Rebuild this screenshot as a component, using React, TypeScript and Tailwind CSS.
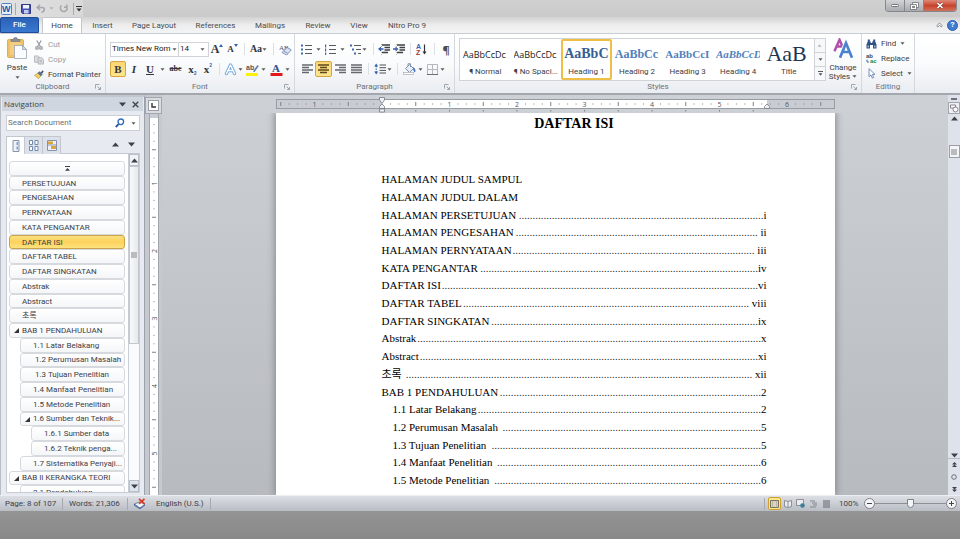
import React, { useLayoutEffect, useRef, useState } from "react";

type Kids = { children?: React.ReactNode };

function Caret({ dim = false }: { dim?: boolean }) {
  return (
    <svg width="5" height="3" viewBox="0 0 5 3" className="shrink-0" aria-hidden="true">
      <path d="M0.5 0.3h4L2.5 2.7z" fill={dim ? "#b5b5b5" : "#5a5a5a"} />
    </svg>
  );
}

function Tool({ label, className = "w-4", active = false, children }: Kids & { label: string; className?: string; active?: boolean }) {
  return (
    <button
      type="button"
      aria-label={label}
      className={`flex h-4 shrink-0 items-center justify-center ${className} ${
        active ? "rounded-xs border border-[#d3a640] bg-linear-to-b from-[#fbd673] to-[#fde58c]" : ""
      }`}
    >
      {children}
    </button>
  );
}

function Sep({ className = "w-2" }: { className?: string }) {
  return (
    <span className={`flex h-3 shrink-0 justify-center ${className}`}>
      <span className="w-px bg-[#dcdfe3]" />
    </span>
  );
}

function Group({ name, className, launcher = true, children }: Kids & { name: string; className: string; launcher?: boolean }) {
  return (
    <section aria-label={name} className={`flex h-full flex-col border-r border-[#d5d8dd] ${className}`}>
      <div className="min-h-0 flex-1">{children}</div>
      <div className="relative flex h-3 items-center justify-center text-[#6c7079]">
        <span>{name}</span>
        {launcher && (
          <button type="button" aria-label={`${name} options`} className="absolute right-1 top-[3px]">
            <svg width="6" height="6" viewBox="0 0 6 6" fill="none" stroke="#8f949c" strokeWidth="0.8">
              <path d="M0.5 4.5v-4h4M2.5 2.5l3 3M5.5 3v2.5H3" />
            </svg>
          </button>
        )}
      </div>
    </section>
  );
}

/* ---------- icons ---------- */

function PasteIcon() {
  return (
    <svg width="20" height="22" viewBox="0 0 20 22" aria-hidden="true">
      <rect x="0.5" y="2.5" width="16" height="18" rx="1.2" fill="#eec067" stroke="#dcae5c" />
      <rect x="3" y="5" width="11" height="13" fill="#f4cd7e" />
      <path d="M4 4.5V2.5h2.2C6.5 1 7.3 0.5 8.5 0.5s2 0.5 2.3 2H13v2z" fill="#8a8f96" stroke="#6f757c" strokeWidth="0.6" />
      <path d="M7.500 8.500h8l4 4v9h-12z" fill="#fbfcfe" stroke="#9aa5b3" strokeWidth="0.8" />
      <path d="M15.500 8.500v4h4z" fill="#cfd9e6" stroke="#9aa5b3" strokeWidth="0.8" />
    </svg>
  );
}

function CutIcon() {
  return (
    <svg width="8" height="10" viewBox="0 0 8 10" fill="none" stroke="#9a9da2" strokeWidth="1.3" aria-hidden="true">
      <path d="M1.800 0.500L5.300 6.500M6.200 0.500L2.700 6.500" />
      <circle cx="2" cy="7.900" r="1.300" />
      <circle cx="6" cy="7.900" r="1.300" />
    </svg>
  );
}

function CopyIcon() {
  return (
    <svg width="11" height="10" viewBox="0 0 11 10" stroke="#a6a9ae" strokeWidth="0.8" fill="#dcdde0" aria-hidden="true">
      <path d="M0.500 0.500h4l2 2v5h-6z" />
      <path d="M4.500 2.500h4l2 2v5h-6z" />
      <path d="M6 5.500h3M6 7.200h3" />
    </svg>
  );
}

function BrushIcon() {
  return (
    <svg width="12" height="11" viewBox="0 0 12 11" aria-hidden="true">
      <path d="M0.500 6.500L5 3.500l3.500 3.500-3 3.500z" fill="#f3cf60" stroke="#a98a3a" strokeWidth="0.6" />
      <path d="M4.200 3.800L6.800 1.500l3.700 3.700-2.300 2.300z" fill="#5b6f8e" />
      <path d="M8.300 3L10.200 0.400l1.400 1.400L9.500 4.500z" fill="#3c4a63" />
    </svg>
  );
}

function EraserIcon() {
  return (
    <svg width="13" height="13" viewBox="0 0 13 13" aria-hidden="true">
      <text x="0" y="6.500" fontSize="7" fontFamily="Liberation Serif" fill="#39537f">AB</text>
      <path d="M3 9.500l5-5 4.300 2.300-4.600 5.200z" fill="#dbe3f2" stroke="#6b80ab" strokeWidth="0.8" />
      <path d="M4.700 8l4 2.300" stroke="#6b80ab" strokeWidth="0.8" />
    </svg>
  );
}

function ListIcon({ kind }: { kind: "bullet" | "number" | "multi" }) {
  const rows = [1, 5, 9];
  return (
    <svg width="11" height="11" viewBox="0 0 11 11" aria-hidden="true">
      {rows.map((y, i) => {
        const shift = kind === "multi" ? i * 2 : 0;
        return (
          <g key={y}>
            <rect x={shift} y={y - 0.5} width={kind === "number" ? 1.2 : 2} height={kind === "number" ? 3 : 2} fill="#4167b2" />
            <rect x={4 + shift} y={y} width={7 - shift} height="1" fill="#555b63" />
          </g>
        );
      })}
    </svg>
  );
}

function IndentIcon({ flip = false }: { flip?: boolean }) {
  return (
    <svg width="12" height="11" viewBox="0 0 12 11" aria-hidden="true">
      <path d="M4 1h8M6.500 3.500H12M6.500 6H12M4 8.500h6" stroke="#3c3f44" strokeWidth="1.3" />
      <path d={flip ? "M0 5l3-2.500v1.800h2.500v1.400H3v1.800z" : "M5.500 5L2.500 2.500v1.800H0v1.400h2.500v1.800z"} fill="#3560b0" />
      <path d="M3.500 0v11" stroke="#777" strokeWidth="0.5" strokeDasharray="1 1" />
    </svg>
  );
}

function AlignIcon({ d, fill = "#65696f" }: { d: string; fill?: string }) {
  return (
    <svg width="11" height="10" viewBox="0 0 11 10" stroke={fill} strokeWidth="1.7" aria-hidden="true">
      <path d={d} />
    </svg>
  );
}

function SortIcon() {
  return (
    <svg width="12" height="13" viewBox="0 0 12 13" aria-hidden="true">
      <text x="0" y="6" fontSize="7" fontWeight="bold" fontFamily="Liberation Sans" fill="#3a62b0">A</text>
      <text x="0" y="12" fontSize="7" fontWeight="bold" fontFamily="Liberation Sans" fill="#a8383b">Z</text>
      <path d="M8.500 1.500v9" stroke="#333" strokeWidth="1.2" />
      <path d="M6.500 8.500h4l-2 3z" fill="#333" />
    </svg>
  );
}

function SpacingIcon() {
  return (
    <svg width="12" height="12" viewBox="0 0 12 12" aria-hidden="true">
      <path d="M5.500 2H12M5.500 4.700H12M5.500 7.400H12M5.500 10H12" stroke="#4c5056" />
      <path d="M2.200 0.500L4.200 3.500h-4zM2.200 11.500L4.200 8.500h-4z" fill="#3560b0" />
      <path d="M2.200 3v6" stroke="#3560b0" strokeDasharray="1.5 1" />
    </svg>
  );
}

function BucketIcon() {
  return (
    <svg width="13" height="12" viewBox="0 0 13 12" aria-hidden="true">
      <path d="M2.500 5.500l4-4 4 4-4 4z" fill="#e8eef8" stroke="#7284a5" strokeWidth="0.9" />
      <path d="M5 3V0.700h2.500V4" fill="none" stroke="#7284a5" strokeWidth="0.8" />
      <path d="M10.500 4.500c1.500 1 1.700 3 1.500 4.500-1 0-1.700-2.500-1.500-4.500z" fill="#3d6cc0" stroke="#3d6cc0" strokeWidth="0.6" />
      <rect x="0.500" y="9.500" width="10" height="2" fill="#fff" stroke="#a9adb3" strokeWidth="0.7" />
    </svg>
  );
}

function BordersIcon() {
  return (
    <svg width="11" height="11" viewBox="0 0 11 11" aria-hidden="true">
      <path d="M0.500 0.500h10M0.500 0.500v10M10.500 0.500v10M5.500 0.500v10M0.500 5.500h10" stroke="#b4b8be" />
      <path d="M0 10.500h11" stroke="#6b6f75" />
    </svg>
  );
}

function BinocularsIcon() {
  return (
    <svg width="11" height="10" viewBox="0 0 11 10" fill="#2f4f87" aria-hidden="true">
      <path d="M1.800 0.500h2v2h0.900v1.500h1.600V2.500h0.900v-2h2v2l1.300 3v4H7V6H4v3.500H0.500v-4l1.300-3z" />
      <path d="M1.500 6.500h1.500v2H1.500zM8 6.500h1.500v2H8z" fill="#9db4dc" />
    </svg>
  );
}

function ReplaceIcon() {
  return (
    <svg width="11" height="11" viewBox="0 0 11 11" aria-hidden="true">
      <text x="0" y="5" fontSize="6" fontWeight="bold" fontFamily="Liberation Sans" fill="#444">ab</text>
      <text x="4" y="10" fontSize="6" fontWeight="bold" fontFamily="Liberation Sans" fill="#2c8a3d">ac</text>
      <path d="M1 6.500v2.500h2" fill="none" stroke="#3d6cc0" />
    </svg>
  );
}

function PointerIcon() {
  return (
    <svg width="8" height="11" viewBox="0 0 8 11" aria-hidden="true">
      <path d="M1 0.700v8l2-1.800 1.300 3.200 1.400-0.600L4.400 6.400H7z" fill="#fff" stroke="#5577ae" strokeWidth="0.8" />
    </svg>
  );
}

function StylesIcon() {
  return (
    <svg width="21" height="21" viewBox="0 0 21 21" fill="none" strokeLinecap="square" aria-hidden="true">
      <path d="M2 12L6.500 1.800 11 12M3.800 8.500h5.500" stroke="#b04fae" strokeWidth="2.500" />
      <path d="M7.500 18.500L13 5l5.500 13.500M9.800 14h6.500" stroke="#fff" strokeWidth="4.500" />
      <path d="M7.500 18.500L13 5l5.500 13.500M9.800 14h6.500" stroke="#4b82d0" strokeWidth="2.700" />
    </svg>
  );
}

/* ---------- title bar and tabs ---------- */

function TitleBar() {
  return (
    <header className="flex h-[17px] shrink-0 items-start justify-between bg-linear-to-b from-[#d0d0d1] to-[#cacaca]">
      <div className="flex h-[17px] items-center bg-linear-to-r from-[#e2e2e2] to-[#d8d8d8] pl-px">
        <svg width="11" height="12" viewBox="0 0 11 12" aria-hidden="true">
          <rect x="0.500" y="0.500" width="10" height="11" rx="1" fill="#e4eefa" stroke="#5580bd" />
          <text x="1" y="9" fontSize="9" fontWeight="bold" fontFamily="Liberation Sans" fill="#1f58a8">W</text>
        </svg>
        <span className="mx-[3px] h-3 w-px bg-[#a9a9a9]" />
        <button type="button" aria-label="Save" className="flex w-[14px] justify-center">
          <svg width="10" height="10" viewBox="0 0 10 10">
            <path d="M0.500 0.500h9v9h-8l-1-1z" fill="#4a55b8" stroke="#2f3a8d" />
            <rect x="2" y="1" width="6" height="3.500" fill="#f2f4fb" />
            <rect x="3" y="6" width="4.500" height="3.500" fill="#c8cbe8" />
          </svg>
        </button>
        <button type="button" aria-label="Undo" className="flex w-4 justify-center">
          <svg width="10" height="9" viewBox="0 0 10 9" fill="none" stroke="#a3a7ae" strokeWidth="1.5">
            <path d="M1.500 3.500h4.500c3.500 0 3 4-0.500 5M4 0.800L1.200 3.500 4 6" />
          </svg>
        </button>
        <Caret dim />
        <button type="button" aria-label="Redo" className="flex w-[18px] justify-center">
          <svg width="9" height="9" viewBox="0 0 9 9" fill="none" stroke="#a3a7ae" strokeWidth="1.5">
            <path d="M2.500 1.500a3.400 3.400 0 1 0 4.500 0M7.700 0.500v2.800H5" />
          </svg>
        </button>
        <span className="mx-px h-3 w-px bg-[#a9a9a9]" />
        <button type="button" aria-label="Customize toolbar" className="flex w-2 justify-center">
          <svg width="6" height="6" viewBox="0 0 6 6" fill="#333"><path d="M0 0h6v1H0zM0.500 2.500h5L3 5.500z" /></svg>
        </button>
      </div>
      <div className="mr-[3px] flex h-3 overflow-hidden rounded-b-sm border border-t-0 border-[#84878c]">
        <button type="button" aria-label="Minimize" className="flex w-[19px] items-center justify-center border-r border-[#84878c] bg-linear-to-b from-[#d3d4d6] to-[#a9abaf]">
          <span className="h-[3px] w-2 rounded-xs border border-[#6e7074] bg-white" />
        </button>
        <button type="button" aria-label="Restore" className="flex w-[19px] items-center justify-center border-r border-[#84878c] bg-linear-to-b from-[#d3d4d6] to-[#a9abaf]">
          <svg width="9" height="8" viewBox="0 0 9 8" fill="#fff" stroke="#6e7074" strokeWidth="0.8">
            <path d="M2.500 0.500h6v5h-6z" /><path d="M0.500 2.500h6v5h-6z" /><path d="M2.500 4.300h2v1.400h-2z" fill="#999" />
          </svg>
        </button>
        <button type="button" aria-label="Close" className="flex w-8 items-center justify-center bg-linear-to-b from-[#dd8a78] via-[#c8432b] to-[#d0705a]">
          <svg width="8" height="7" viewBox="0 0 8 7"><path d="M1.500 1l5 5M6.500 1l-5 5" stroke="#7a3a30" strokeWidth="2.6" /><path d="M1.500 1l5 5M6.500 1l-5 5" stroke="#fff" strokeWidth="1.6" /></svg>
        </button>
      </div>
    </header>
  );
}

const TABS: [string, string][] = [
  ["Insert", "w-[41px]"],
  ["Page Layout", "w-[62px]"],
  ["References", "w-[61px]"],
  ["Mailings", "w-[48px]"],
  ["Review", "w-[48px]"],
  ["View", "w-[34px]"],
  ["Nitro Pro 9", "w-[62px]"],
];

function TabRow() {
  return (
    <nav className="flex h-4 shrink-0 items-stretch bg-linear-to-b from-[#d2d2d2] via-[#ededee] to-[#f3f4f5]">
      <button type="button" className="w-[39px] rounded-t-xs border border-[#1e4d9e] bg-linear-to-b from-[#2b62b8] to-[#3a78cf] font-medium text-white">File</button>
      <button type="button" className="ml-[3px] w-10 rounded-t-xs border border-b-0 border-[#c3c6ca] bg-white text-[#3e4045]">Home</button>
      {TABS.map(([t, w]) => (
        <button key={t} type="button" className={`${w} pt-px text-[#4a4c51]`}>{t}</button>
      ))}
      <div className="flex-1" />
      <button type="button" aria-label="Minimize ribbon" className="flex w-4 items-center justify-center">
        <svg width="7" height="6" viewBox="0 0 7 6" fill="#fff" stroke="#77797d" strokeWidth="0.9"><path d="M0.700 3.800L3.500 1l2.800 2.800-1 1L3.500 3.500 1.700 4.800z" /></svg>
      </button>
      <button type="button" aria-label="Help" className="mr-0.5 flex items-center">
        <span className="flex size-[11px] items-center justify-center rounded-full border border-[#2d62b0] bg-[#3f7bd0] font-bold text-white">?</span>
      </button>
    </nav>
  );
}

/* ---------- ribbon ---------- */

function FontGroup() {
  const serif = "font-['Liberation_Serif',serif] font-bold leading-none text-[#33363b]";
  return (
    <Group name="Font" className="w-[189px] shrink-0">
      <div className="flex flex-col gap-1 pl-1 pt-[7px]">
        <div className="flex h-4 items-center">
          <label className="flex h-[15px] w-[69px] items-center border border-[#d0d3d8] bg-white pl-px pr-px">
            <span className="sr-only">Font name</span>
            <select className="h-[13px] min-w-0 flex-1 appearance-none whitespace-nowrap text-[#222] outline-none"><option>Times New Rom</option></select>
            <Caret />
          </label>
          <label className="flex h-[15px] w-[30px] items-center border border-l-0 border-[#d0d3d8] bg-white pl-px pr-[3px]">
            <span className="sr-only">Font size</span>
            <select className="h-[13px] min-w-0 flex-1 appearance-none text-[#222] outline-none"><option>14</option></select>
            <Caret />
          </label>
          <Tool label="Grow font" className="w-4">
            <span className={`${serif} text-xs`}>A</span><span className="mb-2"><svg width="4" height="3" viewBox="0 0 4 3" fill="#3560b0"><path d="M0 3h4L2 0z" /></svg></span>
          </Tool>
          <Tool label="Shrink font" className="w-[15px]">
            <span className={`${serif} text-[9px]`}>A</span><span className="mb-2"><svg width="4" height="3" viewBox="0 0 4 3" fill="#3560b0"><path d="M0 0h4L2 3z" /></svg></span>
          </Tool>
          <Sep />
          <Tool label="Change case" className="w-[21px]"><span className={`${serif} text-[10px]`}>Aa</span><Caret /></Tool>
          <Sep />
          <Tool label="Clear formatting"><EraserIcon /></Tool>
        </div>
        <div className="flex h-4 items-center">
          <Tool label="Bold" active><b className={`${serif} text-[11px]`}>B</b></Tool>
          <Tool label="Italic"><i className={`${serif} text-[11px]`}>I</i></Tool>
          <Tool label="Underline"><u className={`${serif} text-[11px]`}>U</u></Tool>
          <Tool label="Underline style" className="w-[9px]"><Caret /></Tool>
          <Tool label="Strikethrough" className="w-[17px]"><s className={`${serif} text-[8px]`}>abc</s></Tool>
          <Tool label="Subscript" className="w-[17px]"><span className={`${serif} text-[11px]`}>x</span><span className="mt-2 text-[5px] font-bold leading-none text-[#3560b0]">2</span></Tool>
          <Tool label="Superscript" className="w-[14px]"><span className={`${serif} text-[11px]`}>x</span><span className="mb-2 text-[5px] font-bold leading-none text-[#3560b0]">2</span></Tool>
          <Sep />
          <Tool label="Text effects" className="w-[21px]">
            <svg width="13" height="13" viewBox="0 0 13 13" fill="none" strokeLinecap="round" strokeLinejoin="round">
              <path d="M2.500 10.500L6.500 2l4 8.500M4.300 7.500h4.500" stroke="#7fb0e2" strokeWidth="3.400" />
              <path d="M2.500 10.500L6.500 2l4 8.500M4.300 7.500h4.500" stroke="#fff" strokeWidth="1.300" />
            </svg>
            <span className="w-px" /><Caret />
          </Tool>
          <Tool label="Highlight color" className="w-6">
            <svg width="13" height="13" viewBox="0 0 13 13">
              <text x="0" y="7" fontSize="7" fontWeight="bold" fontFamily="Liberation Sans" fill="#555">ab</text>
              <path d="M7 8.500L11.500 2l1.300 1L8.500 9z" fill="#5b78ac" /><rect y="10" width="12" height="3" fill="#fbf10d" />
            </svg>
            <span className="w-0.5" /><Caret />
          </Tool>
          <Tool label="Font color" className="w-6">
            <svg width="13" height="13" viewBox="0 0 13 13">
              <text x="2" y="9" fontSize="11" fontWeight="bold" fontFamily="Liberation Serif" fill="#2d4c8c">A</text><rect x="0.500" y="10" width="12" height="3" fill="#e3181b" />
            </svg>
            <span className="w-0.5" /><Caret />
          </Tool>
        </div>
      </div>
    </Group>
  );
}

function ParagraphGroup() {
  return (
    <Group name="Paragraph" className="w-[160px] shrink-0">
      <div className="flex flex-col gap-1 pl-1 pt-[7px]">
        <div className="flex h-4 items-center">
          <Tool label="Bullets" className="w-6"><ListIcon kind="bullet" /><span className="w-1" /><Caret /></Tool>
          <Tool label="Numbering" className="w-6"><ListIcon kind="number" /><span className="w-1" /><Caret /></Tool>
          <Tool label="Multilevel list" className="w-[23px]"><ListIcon kind="multi" /><span className="w-px" /><Caret /></Tool>
          <Sep className="w-[6px]" />
          <Tool label="Decrease indent" className="w-[15px]"><IndentIcon flip /></Tool>
          <Tool label="Increase indent" className="w-[15px]"><IndentIcon /></Tool>
          <Sep />
          <Tool label="Sort" className="w-4"><SortIcon /></Tool>
          <Sep />
          <Tool label="Show marks" className="w-4"><span className="font-['Open_Sans',sans-serif] text-[11px] font-bold leading-none text-[#4a4d52]">¶</span></Tool>
        </div>
        <div className="flex h-4 items-center">
          <Tool label="Align left"><AlignIcon d="M0 1h11M0 3.500h7M0 6h11M0 8.500h7" /></Tool>
          <Tool label="Center" className="w-[17px]" active><AlignIcon d="M0 1h11M2 3.500h7M0 6h11M2 8.500h7" fill="#5c4a1e" /></Tool>
          <Tool label="Align right"><AlignIcon d="M0 1h11M4 3.500h7M0 6h11M4 8.500h7" /></Tool>
          <Tool label="Justify"><AlignIcon d="M0 1h11M0 3.500h11M0 6h11M0 8.500h11" /></Tool>
          <Sep />
          <Tool label="Line spacing" className="w-[21px]"><SpacingIcon /><span className="w-px" /><Caret /></Tool>
          <Sep />
          <Tool label="Shading" className="w-6"><BucketIcon /><span className="w-0.5" /><Caret /></Tool>
          <Tool label="Borders" className="w-[22px]"><BordersIcon /><span className="w-0.5" /><Caret /></Tool>
        </div>
      </div>
    </Group>
  );
}

const STYLES: [string, string, string][] = [
  ["AaBbCcDc", "¶ Normal", "text-[9px] font-['Open_Sans',sans-serif] text-[#222]"],
  ["AaBbCcDc", "¶ No Spaci...", "text-[9px] font-['Open_Sans',sans-serif] text-[#222]"],
  ["AaBbC(", "Heading 1", "text-[14px] font-bold font-['Liberation_Serif',serif] text-[#355f93]"],
  ["AaBbCc", "Heading 2", "text-[12px] font-bold font-['Liberation_Serif',serif] text-[#4f81bd]"],
  ["AaBbCcI", "Heading 3", "text-[11px] font-bold font-['Liberation_Serif',serif] text-[#4f81bd]"],
  ["AaBbCcD", "Heading 4", "text-[11px] font-bold italic font-['Liberation_Serif',serif] text-[#4f81bd]"],
  ["AaB", "Title", "text-[22px] font-['Liberation_Serif',serif] text-[#1c3557]"],
];

function StylesGroup() {
  return (
    <Group name="Styles" className="min-w-0 max-w-[407px] flex-1">
      <div className="flex gap-0.5 pl-1 pr-[3px] pt-1">
        <div className="flex h-[43px] min-w-0 flex-1 border border-[#d0d3d8] bg-white">
          {STYLES.map(([sample, name, cls]) => (
            <button
              key={name}
              type="button"
              className={`flex min-w-0 flex-1 flex-col items-center overflow-hidden ${
                name === "Heading 1" ? "rounded-xs border-2 border-[#efbf45] px-px pt-0.5 pb-px" : "px-[3px] pt-1 pb-[3px]"
              }`}
            >
              <span className={`flex h-[22px] w-full items-center overflow-hidden whitespace-nowrap leading-none ${cls}`}>{sample}</span>
              <span className="whitespace-nowrap pt-px leading-[11px] text-[#3e4045]">{name}</span>
            </button>
          ))}
          <div className="flex w-[11px] flex-col border-l border-[#d0d3d8] bg-[#f7f8fa]">
            <button type="button" aria-label="Previous styles" className="flex flex-1 rotate-180 items-center justify-center"><Caret dim /></button>
            <button type="button" aria-label="Next styles" className="flex flex-1 items-center justify-center border-y border-[#d0d3d8]"><Caret /></button>
            <button type="button" aria-label="More styles" className="flex flex-1 flex-col items-center justify-center gap-px"><span className="h-px w-[5px] bg-[#5a5a5a]" /><Caret /></button>
          </div>
        </div>
        <button type="button" className="flex w-[30px] shrink-0 flex-col items-center leading-[9px] text-[#3e4045]">
          <StylesIcon />
          <span className="mt-1">Change</span>
          <span className="flex items-center gap-0.5">Styles <Caret /></span>
        </button>
      </div>
    </Group>
  );
}

function Ribbon() {
  const row = "flex h-[15px] items-center gap-1";
  return (
    <div className="flex h-[62px] shrink-0 border-y border-t-[#c9ccd0] border-b-2 border-b-[#a4a7ad] bg-linear-to-b from-white via-[#fafbfc] to-[#e9ecf1] text-[#3e4045]">
      <Group name="Clipboard" className="w-[106px] shrink-0">
        <div className="flex pt-[3px]">
          <button type="button" className="flex w-[34px] shrink-0 flex-col items-center">
            <PasteIcon />
            <span className="mt-1 leading-[9px]">Paste</span>
            <span className="mt-1"><Caret /></span>
          </button>
          <div className="flex flex-col">
            <button type="button" className={`${row} text-[#9a9da2]`}><span className="flex w-2.5 justify-center"><CutIcon /></span>Cut</button>
            <button type="button" className={`${row} text-[#9a9da2]`}><span className="flex w-2.5 justify-center"><CopyIcon /></span>Copy</button>
            <button type="button" className={`${row} whitespace-nowrap`}><span className="flex w-2.5 justify-center"><BrushIcon /></span>Format Painter</button>
          </div>
        </div>
      </Group>
      <FontGroup />
      <ParagraphGroup />
      <StylesGroup />
      <Group name="Editing" className="w-[53px] shrink-0" launcher={false}>
        <div className="flex flex-col pl-1 pt-0.5">
          <button type="button" className={row}><BinocularsIcon /><span>Find</span><Caret /></button>
          <button type="button" className={row}><ReplaceIcon /><span>Replace</span></button>
          <button type="button" className={row}><span className="flex w-[11px] justify-center"><PointerIcon /></span><span>Select</span><Caret /></button>
        </div>
      </Group>
    </div>
  );
}

/* ---------- navigation pane ---------- */

type NavItem = { text: string; level?: 0 | 1 | 2; open?: boolean; selected?: boolean };

const NAV: NavItem[] = [
  { text: "PERSETUJUAN" },
  { text: "PENGESAHAN" },
  { text: "PERNYATAAN" },
  { text: "KATA PENGANTAR" },
  { text: "DAFTAR ISI", selected: true },
  { text: "DAFTAR TABEL" },
  { text: "DAFTAR SINGKATAN" },
  { text: "Abstrak" },
  { text: "Abstract" },
  { text: "초록" },
  { text: "BAB 1 PENDAHULUAN", open: true },
  { text: "1.1 Latar Belakang", level: 1 },
  { text: " 1.2 Perumusan Masalah", level: 1 },
  { text: " 1.3 Tujuan Penelitian", level: 1 },
  { text: "1.4 Manfaat Penelitian", level: 1 },
  { text: "1.5 Metode Penelitian", level: 1 },
  { text: "1.6 Sumber dan Teknik...", level: 1, open: true },
  { text: "1.6.1 Sumber data", level: 2 },
  { text: "1.6.2 Teknik penga...", level: 2 },
  { text: "1.7 Sistematika Penyaji...", level: 1 },
  { text: "BAB II KERANGKA TEORI", open: true },
  { text: "2.1 Pendahuluan", level: 1 },
];

const LEVELS = ["ml-0", "ml-[11px]", "ml-[22px]"];

function Arrow({ up = false }: { up?: boolean }) {
  return (
    <svg width="7" height="5" viewBox="0 0 7 5" fill="#3d4148" aria-hidden="true">
      <path d={up ? "M0 4.500h7L3.500 0.500z" : "M0 0.500h7L3.500 4.500z"} />
    </svg>
  );
}

function NavPane() {
  const tab = "flex items-center justify-center border border-b-0 border-[#c3c8d0]";
  return (
    <aside className="flex w-[145px] shrink-0 flex-col border-x border-t-2 border-l-[#b9bec6] border-r-[#9da2aa] border-t-[#c3c7cd] bg-[#e7ebf1]">
      <div className="mx-px flex h-[14px] shrink-0 items-center bg-[#cfd6df] pl-0.5 pr-1 text-[#3e4045]">
        <h2 className="flex-1 font-['Open_Sans',sans-serif]">Navigation</h2>
        <button type="button" aria-label="Pane options" className="px-1.5"><Arrow /></button>
        <button type="button" aria-label="Close pane">
          <svg width="7" height="7" viewBox="0 0 7 7" stroke="#3d4148" strokeWidth="1.3"><path d="M0.700 0.700l5.600 5.600M6.300 0.700L0.700 6.300" /></svg>
        </button>
      </div>
      <div className="ml-[5px] mr-1 mt-1 flex h-4 shrink-0 items-center border border-[#cbd0d8] bg-white pr-0.5">
        <input aria-label="Search Document" placeholder="Search Document" className="min-w-0 flex-1 pl-px outline-none placeholder:text-[#6b6e74]" />
        <svg width="10" height="10" viewBox="0 0 10 10" fill="none" aria-hidden="true">
          <circle cx="5.800" cy="3.800" r="2.800" stroke="#2d6bc0" strokeWidth="1.3" />
          <path d="M3.600 6.200L0.800 9" stroke="#2d5aa0" strokeWidth="1.9" />
        </svg>
        <span className="pl-1.5 pr-px"><Caret /></span>
      </div>
      <div className="ml-[5px] mr-1 mt-[5px] flex h-[18px] shrink-0">
        <button type="button" aria-label="Headings" className={`${tab} w-[19px] bg-white`}>
          <svg width="8" height="12" viewBox="0 0 8 12"><path d="M1 0.500h6v11H1z" fill="#eef2f8" stroke="#8693a8" /><path d="M4.500 2h1.500v3H4.500zM4.500 6.500h1.500v3H4.500z" fill="#7fa0cf" /></svg>
        </button>
        <button type="button" aria-label="Pages" className={`${tab} -ml-px w-[19px] bg-[#dde2ea]`}>
          <svg width="10" height="11" viewBox="0 0 10 11" fill="#fff" stroke="#7189ad"><path d="M0.500 0.500h3v4h-3zM6 0.500h3v4H6zM0.500 6.500h3v4h-3zM6 6.500h3v4H6z" /></svg>
        </button>
        <button type="button" aria-label="Results" className={`${tab} -ml-px w-[19px] bg-[#dde2ea]`}>
          <svg width="10" height="11" viewBox="0 0 10 11"><path d="M0.500 0.500h9v10h-9z" fill="#eef2f8" stroke="#8693a8" /><path d="M1 1.500h5v2.500H1zM4 6h5v3H4z" fill="#dda63a" /><path d="M0 5h10" stroke="#8693a8" /></svg>
        </button>
        <div className="flex flex-1 items-center justify-end gap-[9px] border-b border-[#c3c8d0] pr-[5px]">
          <button type="button" aria-label="Previous heading"><Arrow up /></button>
          <button type="button" aria-label="Next heading"><Arrow /></button>
        </div>
      </div>
      <div className="mb-0.5 ml-[5px] mr-1 flex min-h-0 flex-1 border border-t-0 border-[#c8cdd5] bg-white">
        <div className="min-w-0 flex-1 overflow-hidden pl-0.5 pr-[3px] pt-[7px]">
          <ul className="grid h-[339px] auto-rows-fr">
            <li className="flex">
              <button type="button" aria-label="Jump to top" className="flex flex-1 items-center justify-center rounded-[3px] border border-[#d6d9de] bg-linear-to-b from-white to-[#f5f6f8]">
                <svg width="5" height="5" viewBox="0 0 5 5" fill="#3d4148"><path d="M0 0h5v1H0zM0 4.800h5L2.500 2z" /></svg>
              </button>
            </li>
            {NAV.map((n) => (
              <li key={n.text} className={`flex min-w-0 ${LEVELS[n.level ?? 0]}`}>
                <button
                  type="button"
                  className={`flex min-w-0 flex-1 items-center whitespace-pre rounded-[3px] border pt-px text-[#3e4045] ${
                    n.selected ? "border-[#c9a347] bg-linear-to-b from-[#fbdf7e] via-[#fdd25c] to-[#fde37f]" : "border-[#d6d9de] bg-linear-to-b from-white to-[#f5f6f8]"
                  }`}
                >
                  <span className="flex w-3 shrink-0 justify-center">
                    {n.open && <svg width="5" height="5" viewBox="0 0 5 5"><path d="M5 0v5H0z" fill="#333" /></svg>}
                  </span>
                  {n.text}
                </button>
              </li>
            ))}
          </ul>
        </div>
        <div className="flex w-[11px] shrink-0 flex-col border-l border-[#c8cdd5] bg-[#fafbfc]">
          <button type="button" aria-label="Scroll up" className="flex h-3 items-center justify-center border border-[#b9bfc9] bg-[#f0f2f6]"><Arrow up /></button>
          <div className="flex h-[178px] items-center justify-center border border-[#c3c8d0] bg-linear-to-r from-[#f8f9fa] to-[#e6e9ed]"><span className="size-[6px] bg-[#b9bbbf]" /></div>
          <div className="flex-1" />
          <button type="button" aria-label="Scroll down" className="flex h-3 items-center justify-center border border-[#b9bfc9] bg-[#dfe5ef]"><Arrow /></button>
        </div>
      </div>
    </aside>
  );
}

/* ---------- rulers ---------- */

const INCH = 67.5;

function ticks(from: number, to: number) {
  const out: { pos: number; kind: "inch" | "half" | "dot"; n: number }[] = [];
  for (let i = from; i <= to; i++) {
    if (i === 0) continue;
    out.push({ pos: (i * INCH) / 8, kind: i % 8 === 0 ? "inch" : i % 4 === 0 ? "half" : "dot", n: Math.abs(i / 8) });
  }
  return out;
}

function HorizontalRuler() {
  return (
    <svg width="559" height="18" viewBox="0 0 559 18" className="shrink-0" aria-hidden="true">
      <rect x="0.500" y="4.500" width="558" height="9" fill="#c9ccd2" stroke="#989ca3" />
      <rect x="106" y="5" width="385" height="8" fill="#fff" />
      {ticks(-12, 52).map((t) =>
        t.kind === "inch" ? (
          <text key={t.pos} x={106 + t.pos} y="11.500" fontSize="7" textAnchor="middle" fontFamily="Open Sans" fill="#55585e">{t.n}</text>
        ) : (
          <path key={t.pos} d={t.kind === "half" ? `M${106 + t.pos} 7v4` : `M${106 + t.pos} 8.500v1`} stroke="#7c8087" />
        ),
      )}
      {ticks(1, 46).filter((t) => t.kind !== "dot").map((t) => (
        <path key={t.pos} d={`M${106 + t.pos} 15v1.500`} stroke="#7c8087" />
      ))}
      <path d="M103.500 2.500h5v2.500L106 8.500l-2.500-3.500zM106 9l2.500 2.500v2h-5v-2zM103.500 14h5v3h-5z" fill="#eef0f3" stroke="#777b82" strokeWidth="0.8" />
      <path d="M491 9l2.500 2.500v2h-5v-2z" fill="#eef0f3" stroke="#777b82" strokeWidth="0.8" />
    </svg>
  );
}

function VerticalRuler() {
  return (
    <div className="flex w-[17px] shrink-0 flex-col items-center bg-[#c6cad0]">
      <div className="mt-0.5 flex size-[17px] shrink-0 items-center justify-center border border-[#a2a6ad] bg-[#d9dce1]">
        <button type="button" aria-label="Tab selector" className="flex size-[11px] items-center justify-center border border-[#9a9ea6] bg-white">
          <svg width="5" height="5" viewBox="0 0 5 5" fill="none" stroke="#333" strokeWidth="1.4"><path d="M1 0v4h4" /></svg>
        </button>
      </div>
      <div className="min-h-0 flex-1 overflow-hidden">
        <svg width="10" height="384" viewBox="0 0 10 384" aria-hidden="true">
          <rect x="0.500" y="-1" width="9" height="386" fill="#fff" stroke="#a2a6ad" />
          <rect x="1" y="0" width="8" height="4" fill="#c9ccd2" />
          {ticks(1, 45).map((t) =>
            t.kind === "inch" ? (
              <text key={t.pos} x="0" y="0" transform={`translate(7.500 ${2 + t.pos}) rotate(-90)`} fontSize="7" textAnchor="middle" fontFamily="Open Sans" fill="#55585e">{t.n}</text>
            ) : (
              <path key={t.pos} d={t.kind === "half" ? `M3 ${2 + t.pos}h4` : `M4.500 ${2 + t.pos}h1`} stroke="#7c8087" />
            ),
          )}
        </svg>
      </div>
    </div>
  );
}

/* ---------- document ---------- */

type Entry = { title: string; page?: string; sub?: boolean };

const TOC: Entry[] = [
  { title: "HALAMAN JUDUL SAMPUL" },
  { title: "HALAMAN JUDUL DALAM" },
  { title: "HALAMAN PERSETUJUAN", page: "i" },
  { title: "HALAMAN PENGESAHAN", page: " ii" },
  { title: "HALAMAN PERNYATAAN", page: " iii" },
  { title: "KATA PENGANTAR", page: "iv" },
  { title: "DAFTAR ISI", page: "vi" },
  { title: "DAFTAR TABEL", page: " viii" },
  { title: "DAFTAR SINGKATAN", page: "ix" },
  { title: "Abstrak", page: "x" },
  { title: "Abstract", page: "xi" },
  { title: "초록 ", page: " xii" },
  { title: "BAB 1 PENDAHULUAN", page: "2" },
  { title: "1.1 Latar Belakang", page: "2", sub: true },
  { title: "1.2 Perumusan Masalah ", page: "5", sub: true },
  { title: "1.3 Tujuan Penelitian ", page: "5", sub: true },
  { title: "1.4 Manfaat Penelitian ", page: "6", sub: true },
  { title: "1.5 Metode Penelitian ", page: "6", sub: true },
  { title: "1.6 Sumber dan Teknik Pengambilan Data", page: "7", sub: true },
];

/* Dot leader: as many full stops as fit between a title and its page number. */
function Leader() {
  const ref = useRef<HTMLSpanElement>(null);
  const [count, setCount] = useState(0);
  useLayoutEffect(() => {
    const el = ref.current;
    if (!el) return;
    const dot = parseFloat(getComputedStyle(el).fontSize) / 4;
    const fit = () => setCount(Math.max(0, Math.floor(el.clientWidth / dot)));
    fit();
    window.addEventListener("resize", fit);
    return () => window.removeEventListener("resize", fit);
  }, []);
  return (
    <span ref={ref} aria-hidden="true" className="w-0 flex-1 text-right text-[#333]">{".".repeat(count)}</span>
  );
}

function Page() {
  return (
    <article className="w-[559px] shrink-0 bg-white pl-[106px] pr-[68px] font-['Liberation_Serif','Noto_Sans_CJK_KR',serif] text-[11px] text-black shadow-[0_0_7px_1px_#83868c]">
      <h1 className="pt-0.5 text-center text-[14px] font-bold leading-[18px]">DAFTAR ISI</h1>
      <ol className="mt-[38px] grid h-[336px] auto-rows-fr">
        {TOC.map((e) => (
          <li key={e.title} className={`flex min-w-0 items-center whitespace-pre leading-[13px] ${e.sub ? "pl-[11px]" : ""}`}>
            <span>{e.title}</span>
            {e.page && (
              <>
                <Leader />
                <span>{e.page}</span>
              </>
            )}
          </li>
        ))}
      </ol>
    </article>
  );
}

function DocScrollbar() {
  return (
    <div className="flex w-3 shrink-0 flex-col items-center bg-[#dde2eb] pt-[3px]">
      <span className="h-0.5 w-1.5 bg-[#6e727a]" />
      <button type="button" aria-label="Toggle ruler" className="mt-0.5 flex size-3 shrink-0 items-center justify-center border border-[#a2a6ad] bg-[#eef0f4]">
        <svg width="9" height="9" viewBox="0 0 9 9" fill="#fff" stroke="#8a8290"><path d="M0.500 1h5v3h-5z" /><circle cx="5.500" cy="5.500" r="2.500" /></svg>
      </button>
      <button type="button" aria-label="Scroll up" className="mt-0.5"><Arrow up /></button>
      <div className="mt-6 flex h-[13px] w-[11px] shrink-0 items-center justify-center border border-[#9a9fa8] bg-[#f3f5f8]"><span className="size-[6px] bg-[#b9bbbf]" /></div>
      <div className="flex-1" />
      <button type="button" aria-label="Scroll down"><Arrow /></button>
      <div className="flex w-full flex-col items-center gap-[7px] border-t border-[#b6bbc4] pb-[3px] pt-[3px]">
        <button type="button" aria-label="Previous page"><svg width="5" height="5" viewBox="0 0 5 5" fill="#3d4148"><path d="M0 2.400h5L2.500 0zM0 5h5L2.500 2.600z" /></svg></button>
        <button type="button" aria-label="Browse object"><svg width="6" height="6" viewBox="0 0 6 6" fill="none" stroke="#6e727a"><circle cx="3" cy="3" r="2.300" /></svg></button>
        <button type="button" aria-label="Next page"><svg width="5" height="5" viewBox="0 0 5 5" fill="#3d4148"><path d="M0 0h5L2.500 2.400zM0 2.600h5L2.500 5z" /></svg></button>
      </div>
    </div>
  );
}

/* ---------- status bar ---------- */

function StatusBar() {
  const sep = "h-3 w-px bg-[#a5a9b0]";
  const view = "flex size-[13px] items-center justify-center";
  return (
    <footer className="flex h-4 shrink-0 items-center border-t border-[#eceef1] bg-linear-to-b from-[#dcdfe4] to-[#b9bdc4] text-[#3e4045]">
      <span className="w-[62px] pl-[5px]">Page: 8 of 107</span>
      <span className={sep} />
      <span className="w-16 pl-1.5">Words: 21,306</span>
      <span className={sep} />
      <button type="button" aria-label="Proofing errors" className="flex w-6 justify-center">
        <svg width="12" height="11" viewBox="0 0 12 11">
          <path d="M0.500 6l5-2 5.500 2-5 4z" fill="#f4f6fa" stroke="#56698f" strokeWidth="0.8" /><path d="M0.500 6v1.500L6 10.700l5-3.700" fill="none" stroke="#3c5ea3" />
          <path d="M5 0.800l5.500 5M10.500 0.800L5 5.800" stroke="#da3a24" strokeWidth="1.6" />
        </svg>
      </button>
      <span className="w-[58px] pl-1">English (U.S.)</span>
      <span className={sep} />
      <div className="flex-1" />
      <span className={sep} />
      <div className="ml-[3px] flex items-center">
        <button type="button" aria-label="Print layout" className={`${view} rounded-xs border border-[#d39f2c] bg-[#fde88f]`}>
          <svg width="9" height="8" viewBox="0 0 9 8"><path d="M0.500 0.500h8v7h-8z" fill="#d8d4c3" stroke="#77705a" /><path d="M2.500 0.500v7M6.500 0.500v7" stroke="#a8a18a" strokeWidth="0.6" /></svg>
        </button>
        <button type="button" aria-label="Full screen reading" className={view}>
          <svg width="8" height="8" viewBox="0 0 8 8" fill="#e9ebee" stroke="#83878e" strokeWidth="0.9"><path d="M0.500 0.500L4 1.500l3.500-1v6L4 7.500l-3.500-1zM4 1.500v6" /></svg>
        </button>
        <button type="button" aria-label="Web layout" className={view}>
          <svg width="9" height="9" viewBox="0 0 9 9"><path d="M0.500 0.500h7v6h-7z" fill="#e9ebee" stroke="#83878e" strokeWidth="0.9" /><circle cx="6.500" cy="6.500" r="2.300" fill="#3d7f98" /></svg>
        </button>
        <button type="button" aria-label="Outline" className={view}>
          <svg width="7" height="8" viewBox="0 0 7 8" stroke="#85898f"><path d="M0 1h5M2 3h5M3 5h4M0 7h6" /></svg>
        </button>
        <button type="button" aria-label="Draft" className={view}>
          <svg width="7" height="8" viewBox="0 0 7 8" stroke="#85898f" strokeWidth="1.3"><path d="M0 1h7M0 3h7M0 5h7M0 7h7" /></svg>
        </button>
      </div>
      <span className="ml-1.5 w-[25px]">100%</span>
      <button type="button" aria-label="Zoom out" className="flex size-[11px] items-center justify-center rounded-full border border-[#7c8087] bg-[#f4f5f7]"><span className="h-px w-[5px] bg-[#444]" /></button>
      <input
        type="range"
        aria-label="Zoom"
        defaultValue={50}
        className="h-[10px] w-[71px] appearance-none bg-transparent [&::-webkit-slider-runnable-track]:h-px [&::-webkit-slider-runnable-track]:bg-[#8b8f96] [&::-webkit-slider-thumb]:-mt-1 [&::-webkit-slider-thumb]:h-[9px] [&::-webkit-slider-thumb]:w-[7px] [&::-webkit-slider-thumb]:appearance-none [&::-webkit-slider-thumb]:rounded-b-sm [&::-webkit-slider-thumb]:border [&::-webkit-slider-thumb]:border-[#7c8087] [&::-webkit-slider-thumb]:bg-[#f4f5f7]"
      />
      <button type="button" aria-label="Zoom in" className="mr-[3px] flex size-[11px] items-center justify-center rounded-full border border-[#7c8087] bg-[#f4f5f7]">
        <svg width="5" height="5" viewBox="0 0 5 5" stroke="#444"><path d="M0 2.500h5M2.500 0v5" /></svg>
      </button>
    </footer>
  );
}

export default function App() {
  return (
    <div className="flex h-screen flex-col overflow-hidden bg-[#929292] font-['Roboto','Noto_Sans_CJK_KR',sans-serif] text-[8px] leading-[12px]">
      <TitleBar />
      <TabRow />
      <Ribbon />
      <div className="flex min-h-0 flex-1">
        <NavPane />
        <VerticalRuler />
        <main className="flex min-w-0 flex-1 flex-col items-center bg-linear-to-b from-[#cdd0d5] to-[#b7babf]">
          <HorizontalRuler />
          <div className="flex min-h-0 w-full flex-1 justify-center overflow-hidden">
            <Page />
          </div>
        </main>
        <DocScrollbar />
      </div>
      <StatusBar />
      <div className="h-7 shrink-0 bg-linear-to-b from-[#949494] to-[#888888]" />
    </div>
  );
}
